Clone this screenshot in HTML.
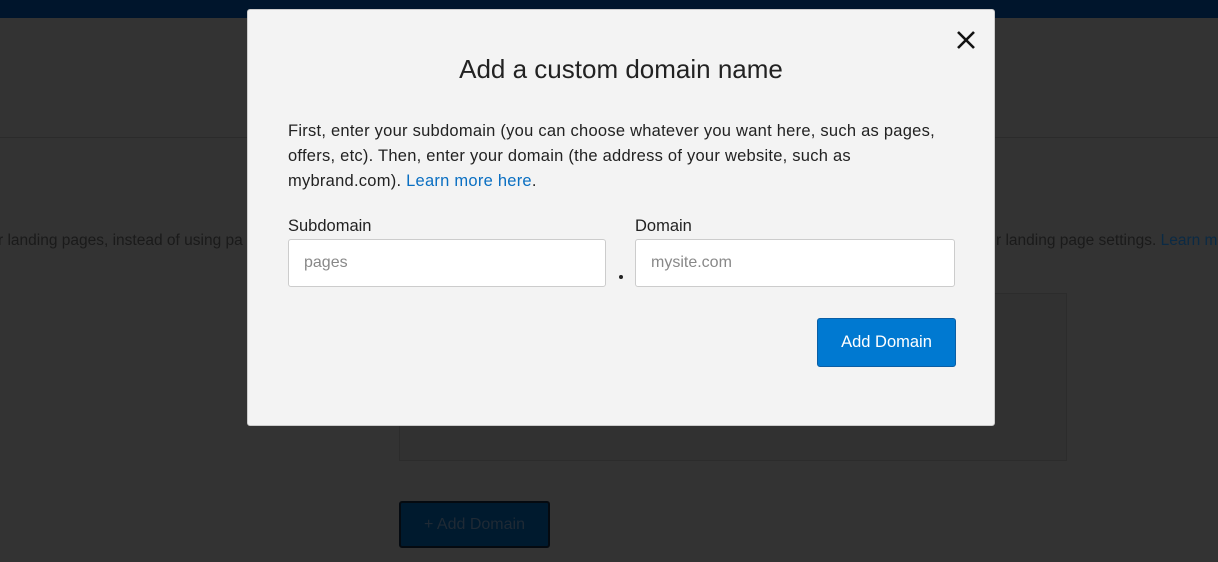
<!DOCTYPE html>
<html><head><style>
*{box-sizing:border-box;margin:0;padding:0}
body{width:1218px;height:562px;overflow:hidden;background:#333;font-family:"Liberation Sans",sans-serif;position:relative}
.top{position:absolute;left:0;top:0;width:1218px;height:18px;background:#00152c}
.hr{position:absolute;left:0;top:137px;width:1218px;height:1px;background:#2b2b2b}
.bgtext{position:absolute;top:232px;font-size:15.5px;color:#1a1a1a;white-space:nowrap}
.box{position:absolute;left:399px;top:293px;width:668px;height:168px;border:1px solid #2c2c2c;background:#313131}
.btn2{position:absolute;left:399px;top:501px;width:151px;height:47px;background:#001a2e;border:2px solid #050a10;border-radius:3px;color:#1f2a35;font-size:16px;text-align:center;line-height:43px}
.modal{position:absolute;left:247px;top:9px;width:748px;height:417px;background:#f3f3f3;border:1px solid #ccc;border-radius:3px}
.x{position:absolute;left:708px;top:20px;width:20px;height:20px}
h1{position:absolute;left:0;width:100%;top:44px;text-align:center;font-weight:normal;font-size:26px;color:#222}
p{position:absolute;left:40px;top:109px;width:700px;font-size:16.5px;line-height:25px;color:#222;white-space:nowrap;letter-spacing:0.25px}
a{color:#0a6fc2;text-decoration:none}
.lbl{position:absolute;top:207px;font-size:16.5px;color:#222}
.in{position:absolute;top:229px;height:48px;background:#fff;border:1px solid #ccc;border-radius:3px;font-size:16px;color:#888;padding-left:15px;line-height:46px}
.dot{position:absolute;left:371px;top:265px;width:4px;height:4px;background:#222;border-radius:50%}
.btn{position:absolute;left:569px;top:308px;width:139px;height:49px;background:#0079d1;border:1px solid #0a5ea5;border-radius:3px;color:#fff;font-size:16.5px;text-align:center;line-height:47px}
</style></head><body>
<div class="top"></div>
<div class="hr"></div>
<div class="bgtext" style="left:-2px">r landing pages, instead of using pa</div>
<div class="bgtext" style="left:996px">r landing page settings. <span style="color:#0b2a44">Learn m</span></div>
<div class="box"></div>
<div class="btn2">+ Add Domain</div>
<div class="modal">
<svg class="x" viewBox="0 0 20 20"><path d="M2 2L18 18M18 2L2 18" stroke="#111" stroke-width="2.6"/></svg>
<h1>Add a custom domain name</h1>
<p>First, enter your subdomain (you can choose whatever you want here, such as pages,<br>offers, etc). Then, enter your domain (the address of your website, such as<br>mybrand.com). <a>Learn more here</a>.</p>
<div class="lbl" style="left:40px">Subdomain</div>
<div class="lbl" style="left:387px">Domain</div>
<div class="in" style="left:40px;width:318px">pages</div>
<div class="dot"></div>
<div class="in" style="left:387px;width:320px">mysite.com</div>
<div class="btn">Add Domain</div>
</div>
</body></html>
